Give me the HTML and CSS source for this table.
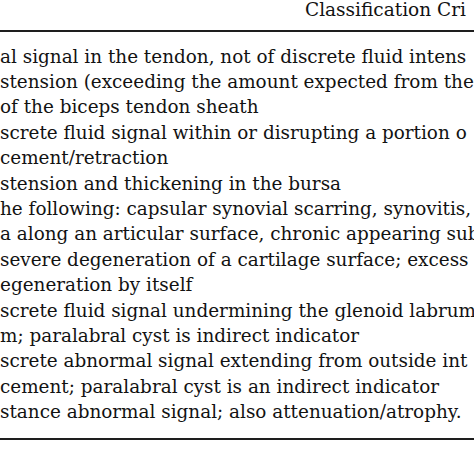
FILE: index.html
```html
<!DOCTYPE html>
<html>
<head>
<meta charset="utf-8">
<link rel="stylesheet" href="styles.css">
</head>
<body>
<div class="table">
  <div class="head"><span class="col-title">Classification Cri</span></div>
  <div class="rows">
    <div class="line">al signal in the tendon, not of discrete fluid intens</div>
    <div class="line">stension (exceeding the amount expected from the</div>
    <div class="line">of the biceps tendon sheath</div>
    <div class="line">screte fluid signal within or disrupting a portion o</div>
    <div class="line">cement/retraction</div>
    <div class="line">stension and thickening in the bursa</div>
    <div class="line">he following: capsular synovial scarring, synovitis,</div>
    <div class="line">a along an articular surface, chronic appearing sub</div>
    <div class="line">severe degeneration of a cartilage surface; excess</div>
    <div class="line">egeneration by itself</div>
    <div class="line">screte fluid signal undermining the glenoid labrum</div>
    <div class="line">m; paralabral cyst is indirect indicator</div>
    <div class="line">screte abnormal signal extending from outside int</div>
    <div class="line">cement; paralabral cyst is an indirect indicator</div>
    <div class="line">stance abnormal signal; also attenuation/atrophy.</div>
  </div>
</div>
</body>
</html>
```
FILE: styles.css
```css
html, body {
  margin: 0;
  padding: 0;
  background: #ffffff;
}
body {
  width: 474px;
  height: 474px;
  overflow: hidden;
}
.table {
  width: 474px;
  overflow: hidden;
  font-family: "DejaVu Serif", serif;
  color: #121212;
}
.head {
  height: 30px;
  border-bottom: 2px solid #1e1e1e;
  padding-left: 305px;
  white-space: nowrap;
  overflow: hidden;
}
.col-title {
  display: block;
  font-size: 18.5px;
  line-height: 20px;
}
.rows {
  padding: 11.5px 0 13px 0;
  border-bottom: 2px solid #1e1e1e;
}
.line {
  font-size: 18.4px;
  line-height: 25.4px;
  white-space: nowrap;
  overflow: hidden;
}
```
